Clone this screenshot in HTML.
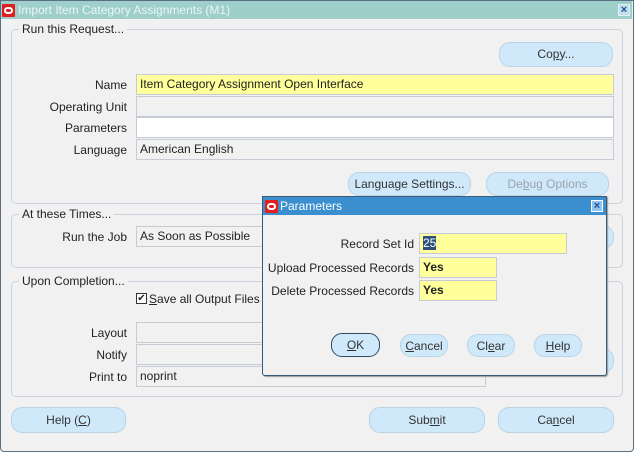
<!DOCTYPE html>
<html><head><meta charset="utf-8"><style>
*{box-sizing:border-box;margin:0;padding:0}
body{width:640px;height:454px;background:#fff;position:relative;overflow:hidden;font-family:"Liberation Sans",sans-serif;font-size:12px;color:#222}
.a{position:absolute}
.frame{left:0;top:0;width:634px;height:452px;background:#f1f1f1;border:1px solid #5a6f80;border-radius:0 0 4px 4px}
.title{left:1px;top:1px;width:631px;height:18px;background:#9fcfcb}
.title span{position:absolute;left:17px;top:2px;color:#eaf6f5;font-size:12px}
.logo{width:13px;height:13px;background:#e02020;border-radius:1px}
.logo:after{content:"";position:absolute;left:2px;top:3px;width:9px;height:7px;border:2px solid #fff;border-radius:4px;box-sizing:border-box}
.grp{border:1px solid #cdd3de;border-radius:5px}
.gl{background:#f1f1f1;padding:0 3px;font-size:12px}
.lbl{text-align:right;font-size:12px}
.f{border:1px solid #c5ccd6;height:21px;padding:2px 3px;font-size:12px}
.y{background:#ffff9c}.g{background:#f1f1f1}.w{background:#fff}
.btn{background:#cfe8fa;border:1px solid #b9d3e6;border-radius:11px;text-align:center;font-size:12px;line-height:22px;color:#333}
.db{border:1px solid #2b4b66;border-radius:11px}
.dlg{left:262px;top:196px;width:345px;height:180px;background:#f1f1f1;border:1px solid #3b5a76;border-radius:0 0 3px 3px;box-shadow:1px 1px 1px #999}
.dt{left:0;top:0;width:343px;height:18px;background:#3c8fcf}
.x{width:12px;height:12px;background:#8fc4ee;border:1px solid #fff;color:#1a4f8a;font-size:11px;line-height:10px;text-align:center;font-weight:bold}
</style></head><body>
<div class="a frame"></div>
<div class="a title"><div class="a logo" style="left:1px;top:3px"></div><span>Import Item Category Assignments (M1)</span>
<div class="a x" style="left:617px;top:3px;background:#bfe0ea;border-color:#dfeff3">×</div></div>

<div class="a grp" style="left:11px;top:29px;width:612px;height:175px"></div>
<div class="a gl" style="left:19px;top:22px">Run this Request...</div>
<div class="a btn" style="left:499px;top:42px;width:114px;height:25px">Co<u>p</u>y...</div>
<div class="a lbl" style="left:20px;top:78px;width:107px">Name</div>
<div class="a f y" style="left:136px;top:74px;width:478px">Item Category Assignment Open Interface</div>
<div class="a lbl" style="left:20px;top:100px;width:107px">Operating Unit</div>
<div class="a f g" style="left:136px;top:96px;width:478px"></div>
<div class="a lbl" style="left:20px;top:121px;width:107px">Parameters</div>
<div class="a f w" style="left:136px;top:117px;width:478px"></div>
<div class="a lbl" style="left:20px;top:143px;width:107px">Language</div>
<div class="a f g" style="left:136px;top:139px;width:478px">American English</div>
<div class="a btn" style="left:348px;top:172px;width:123px;height:24px">Lan<u>g</u>uage Settings...</div>
<div class="a btn" style="left:486px;top:172px;width:123px;height:24px;color:#9aa4ad">De<u>b</u>ug Options</div>

<div class="a grp" style="left:11px;top:214px;width:612px;height:54px"></div>
<div class="a gl" style="left:19px;top:207px">At these Times...</div>
<div class="a lbl" style="left:20px;top:230px;width:107px">Run the Job</div>
<div class="a f g" style="left:136px;top:226px;width:130px">As Soon as Possible</div>
<div class="a btn" style="left:590px;top:225px;width:24px;height:24px"></div>

<div class="a grp" style="left:11px;top:281px;width:612px;height:116px"></div>
<div class="a gl" style="left:19px;top:274px">Upon Completion...</div>
<div class="a" style="left:136px;top:293px;width:11px;height:11px;border:1px solid #333;background:#fff;font-size:10px;line-height:9px;text-align:center">✔</div>
<div class="a" style="left:149px;top:292px"><u>S</u>ave all Output Files</div>
<div class="a lbl" style="left:20px;top:326px;width:107px">Layout</div>
<div class="a f g" style="left:136px;top:322px;width:130px"></div>
<div class="a lbl" style="left:20px;top:348px;width:107px">Notify</div>
<div class="a f g" style="left:136px;top:344px;width:130px"></div>
<div class="a lbl" style="left:20px;top:370px;width:107px">Print to</div>
<div class="a f g" style="left:136px;top:366px;width:350px">noprint</div>
<div class="a btn" style="left:590px;top:348px;width:24px;height:25px"></div>

<div class="a btn" style="left:11px;top:407px;width:115px;height:26px;line-height:24px">Help (<u>C</u>)</div>
<div class="a btn" style="left:369px;top:407px;width:116px;height:26px;line-height:24px">Sub<u>m</u>it</div>
<div class="a btn" style="left:498px;top:407px;width:116px;height:26px;line-height:24px">Ca<u>n</u>cel</div>

<div class="a dlg">
<div class="a dt"><div class="a logo" style="left:2px;top:3px"></div><span class="a" style="left:17px;top:2px;color:#fff">Parameters</span>
<div class="a x" style="left:328px;top:3px">×</div></div>
<div class="a lbl" style="left:0;top:40px;width:151px">Record Set Id</div>
<div class="a f y" style="left:156px;top:36px;width:148px"><span style="background:#2d4f7a;color:#fff">25</span></div>
<div class="a lbl" style="left:0;top:64px;width:151px">Upload Processed Records</div>
<div class="a f y" style="left:156px;top:60px;width:78px;font-weight:bold">Yes</div>
<div class="a lbl" style="left:0;top:87px;width:151px">Delete Processed Records</div>
<div class="a f y" style="left:156px;top:83px;width:78px;font-weight:bold">Yes</div>
<div class="a btn db" style="left:68px;top:136px;width:49px;height:24px"><u>O</u>K</div>
<div class="a btn" style="left:137px;top:137px;width:48px;height:23px"><u>C</u>ancel</div>
<div class="a btn" style="left:204px;top:137px;width:48px;height:23px">Cl<u>e</u>ar</div>
<div class="a btn" style="left:271px;top:137px;width:48px;height:23px"><u>H</u>elp</div>
</div>
</body></html>
